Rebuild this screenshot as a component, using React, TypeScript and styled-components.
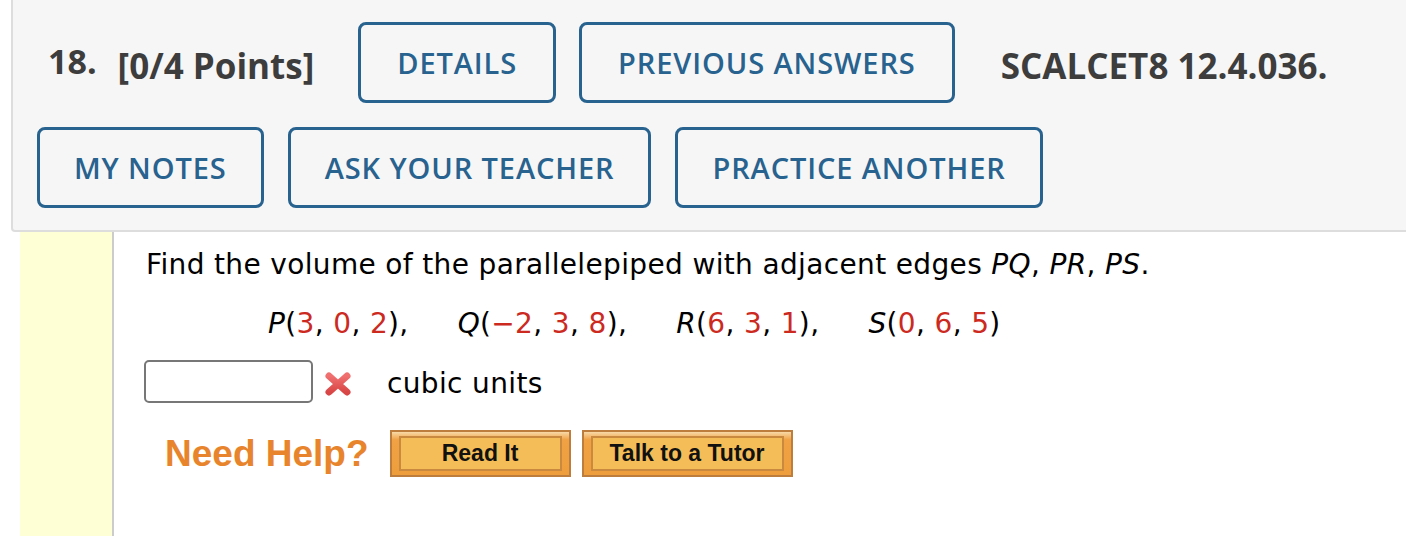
import React from "react"
import styled, { createGlobalStyle } from "styled-components"

const GlobalStyle = createGlobalStyle`
	html, body {
		margin: 0;
		padding: 0;
		background: #ffffff;
		overflow: hidden;
	}
`

const HEADER_FONT = `"Open Sans", "Liberation Sans", sans-serif`
const BODY_FONT = `"DejaVu Sans", Verdana, sans-serif`
const BLUE = "#28628f"

export default function App() {
	return (
		<>
			<GlobalStyle />
			<Page>
				<Header>
					<HeaderRow>
						<Number>18.</Number>
						<Points>[0/4 Points]</Points>
						<Buttons>
							<OutlineButton>DETAILS</OutlineButton>
							<OutlineButton>PREVIOUS ANSWERS</OutlineButton>
						</Buttons>
						<Source>SCALCET8 12.4.036.</Source>
					</HeaderRow>
					<Buttons $wideGap>
						<OutlineButton $tight>MY NOTES</OutlineButton>
						<OutlineButton $tight>ASK YOUR TEACHER</OutlineButton>
						<OutlineButton $tight>PRACTICE ANOTHER</OutlineButton>
					</Buttons>
				</Header>
				<Body>
					<Sidebar />
					<Question>
						<Prompt>
							Find the volume of the parallelepiped with adjacent edges <Var>PQ</Var>,{" "}
							<Var>PR</Var>, <Var>PS</Var>.
						</Prompt>
						<Points3D>
							<Point name="P" coords={["3", "0", "2"]} />,
							<Spacer />
							<Point name="Q" coords={["\u22122", "3", "8"]} />,
							<Spacer />
							<Point name="R" coords={["6", "3", "1"]} />,
							<Spacer />
							<Point name="S" coords={["0", "6", "5"]} />
						</Points3D>
						<AnswerRow>
							<AnswerInput type="text" />
							<WrongMark />
							<Unit>cubic units</Unit>
						</AnswerRow>
						<HelpRow>
							<NeedHelp>Need Help?</NeedHelp>
							<HelpButton>
								<HelpInner $wide={false}>Read It</HelpInner>
							</HelpButton>
							<HelpButton>
								<HelpInner $wide>Talk to a Tutor</HelpInner>
							</HelpButton>
						</HelpRow>
					</Question>
				</Body>
			</Page>
		</>
	)
}

function Point({ name, coords }: { name: string; coords: string[] }) {
	return (
		<span>
			<Var>{name}</Var>(
			{coords.map((c, i) => (
				<React.Fragment key={i}>
					<Red>{c}</Red>
					{i < coords.length - 1 ? ", " : ""}
				</React.Fragment>
			))}
			)
		</span>
	)
}

function WrongMark() {
	return (
		<Mark viewBox="0 0 30 28" width="30" height="28">
			<defs>
				<linearGradient id="xg" x1="0" y1="0" x2="0" y2="1">
					<stop offset="0" stopColor="#f07070" />
					<stop offset="1" stopColor="#d94646" />
				</linearGradient>
			</defs>
			<path
				d="M6 6 L24 22 M24 6 L6 22"
				stroke="url(#xg)"
				strokeWidth="7"
				strokeLinecap="round"
				fill="none"
			/>
		</Mark>
	)
}

const Page = styled.div`
	width: 100%;
	min-height: 536px;
`

const Header = styled.div`
	margin-left: 11px;
	margin-right: -20px;
	background: #f6f6f6;
	border: 2px solid #dddddd;
	border-top: none;
	border-radius: 0 0 4px 4px;
	padding: 22px 0 22px 24px;
	display: flex;
	flex-direction: column;
	gap: 24px;
`

const HeaderRow = styled.div`
	display: flex;
	align-items: center;
	padding-left: 11px;
	font-family: ${HEADER_FONT};
	font-weight: 700;
	color: #3d3d3d;
	font-size: 35px;
`

const Number = styled.span`
	margin-right: 21px;
	margin-bottom: 4px;
	font-size: 34px;
`

const Points = styled.span`
	margin-right: 44px;
	margin-top: 6px;
`

const Source = styled.span`
	margin-left: 46px;
	margin-top: 6px;
`

const Buttons = styled.div<{ $wideGap?: boolean }>`
	display: flex;
	gap: ${p => (p.$wideGap ? "24px" : "23px")};
`

const OutlineButton = styled.div<{ $tight?: boolean }>`
	box-sizing: border-box;
	height: 81px;
	padding: 0 ${p => (p.$tight ? "34px" : "36px")};
	display: flex;
	align-items: center;
	border: 3px solid ${BLUE};
	border-radius: 8px;
	color: ${BLUE};
	font-family: ${HEADER_FONT};
	font-weight: 600;
	font-size: 29px;
	letter-spacing: 0.9px;
	white-space: nowrap;
`

const Body = styled.div`
	display: flex;
	min-height: 305px;
`

const Sidebar = styled.div`
	width: 92px;
	margin-left: 20px;
	background: #ffffd6;
	border-right: 2px solid #cccccc;
	flex-shrink: 0;
`

const Question = styled.div`
	padding: 17px 0 0 32px;
	font-family: ${BODY_FONT};
	font-size: 28px;
	letter-spacing: 0.35px;
	color: #000000;
	display: flex;
	flex-direction: column;
`

const Prompt = styled.div`
	line-height: 32px;
`

const Var = styled.i``

const Red = styled.span`
	color: #cc2a1f;
`

const Points3D = styled.div`
	line-height: 32px;
	margin-top: 27px;
	padding-left: 122px;
	display: flex;
	white-space: pre;
`

const Spacer = styled.span`
	width: 49px;
`

const AnswerRow = styled.div`
	display: flex;
	align-items: center;
	margin-top: 20px;
`

const AnswerInput = styled.input`
	box-sizing: border-box;
	width: 169px;
	height: 43px;
	margin: 0 0 0 -2px;
	border: 2px solid #777777;
	border-radius: 5px;
	background: #ffffff;
	outline: none;
`

const Mark = styled.svg`
	margin-left: 10px;
	margin-top: 4px;
`

const Unit = styled.span`
	margin-left: 34px;
	margin-top: 3px;
`

const HelpRow = styled.div`
	display: flex;
	align-items: center;
	margin-top: 27px;
	padding-left: 19px;
`

const NeedHelp = styled.span`
	font-family: "Liberation Sans", Arial, sans-serif;
	font-weight: 700;
	font-size: 37px;
	letter-spacing: 0;
	color: #e8852c;
	margin-right: 21px;
`

const HelpButton = styled.div`
	box-sizing: border-box;
	height: 47px;
	padding: 4px 7px;
	margin-right: 11px;
	border: 2px solid #bd7d3c;
	background: linear-gradient(#f8d9a8 0%, #f0a244 18%, #ee9e3c 100%);
	display: flex;
`

const HelpInner = styled.div<{ $wide: boolean }>`
	box-sizing: border-box;
	width: ${p => (p.$wide ? "193px" : "163px")};
	display: flex;
	align-items: center;
	justify-content: center;
	border: 2px solid #c98a40;
	background: #f5bd58;
	font-family: "Liberation Sans", Arial, sans-serif;
	font-weight: 700;
	font-size: 23px;
	letter-spacing: 0;
	color: #111111;
`
